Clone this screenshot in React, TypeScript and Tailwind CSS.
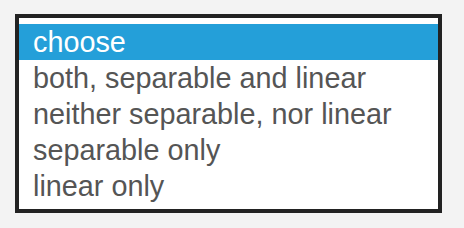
export default function App() {
  const options = [
    'choose',
    'both, separable and linear',
    'neither separable, nor linear',
    'separable only',
    'linear only',
  ];
  return (
    <div className="w-[464px] h-[228px] bg-[#f3f3f3] pt-[14px] pl-[15px]">
      <div className="w-[427px] h-[199px] border-4 border-[#222222] bg-white py-[6px] font-['Liberation_Sans',Arial,sans-serif]">
        {options.map((o, i) => (
          <div
            key={o}
            className={
              i === 0
                ? 'h-[36px] leading-[36px] px-[14px] text-[28.8px] bg-[#249fd9] text-white'
                : 'h-[36px] leading-[36px] px-[14px] text-[28.8px] text-[#555555]'
            }
          >
            {o}
          </div>
        ))}
      </div>
    </div>
  );
}
